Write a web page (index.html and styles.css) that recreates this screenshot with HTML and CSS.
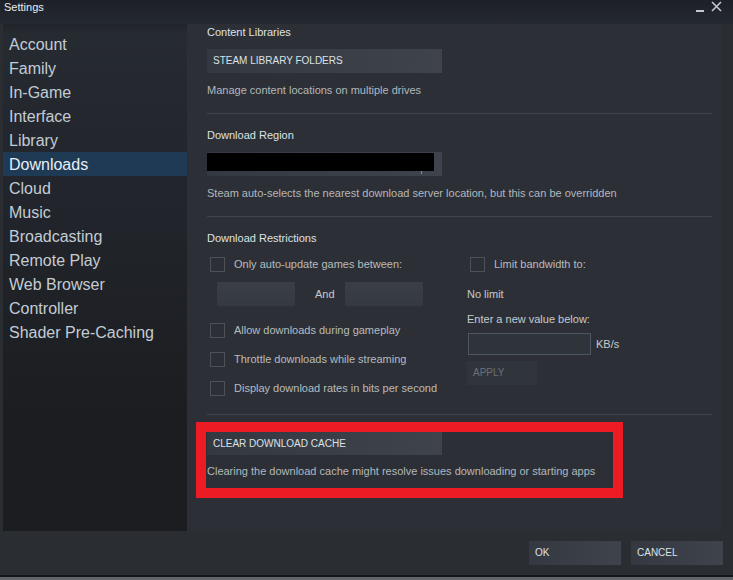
FILE: index.html
```html
<!DOCTYPE html>
<html>
<head>
<meta charset="utf-8">
<link rel="stylesheet" href="styles.css">
</head>
<body>
<div class="window">
  <div class="titlebar">
    <span class="title">Settings</span>
    <div class="controls">
      <span class="min"></span>
      <svg class="close" width="11" height="11" viewBox="0 0 11 11"><path d="M1 1 L10 10 M10 1 L1 10" stroke="#c3c7cb" stroke-width="1.6" fill="none"/></svg>
    </div>
  </div>
  <div class="main">
    <nav class="sidebar">
      <div class="item">Account</div>
      <div class="item">Family</div>
      <div class="item">In-Game</div>
      <div class="item">Interface</div>
      <div class="item">Library</div>
      <div class="item active">Downloads</div>
      <div class="item">Cloud</div>
      <div class="item">Music</div>
      <div class="item">Broadcasting</div>
      <div class="item">Remote Play</div>
      <div class="item">Web Browser</div>
      <div class="item">Controller</div>
      <div class="item">Shader Pre-Caching</div>
    </nav>
    <div class="content">
      <section class="sec first">
        <h3 class="head">Content Libraries</h3>
        <div class="btn wide">STEAM LIBRARY FOLDERS</div>
        <p class="desc">Manage content locations on multiple drives</p>
      </section>
      <div class="sep"></div>
      <section class="sec">
        <h3 class="head">Download Region</h3>
        <div class="dropdown"><div class="redact"></div><span class="tick"></span></div>
        <p class="desc">Steam auto-selects the nearest download server location, but this can be overridden</p>
      </section>
      <div class="sep"></div>
      <section class="sec">
        <h3 class="head">Download Restrictions</h3>
        <div class="restrict">
          <div class="col-left">
            <label class="check"><span class="box"></span><span>Only auto-update games between:</span></label>
            <div class="times">
              <span class="time"></span>
              <span class="and">And</span>
              <span class="time"></span>
            </div>
            <label class="check c-allow"><span class="box"></span><span>Allow downloads during gameplay</span></label>
            <label class="check c-next"><span class="box"></span><span>Throttle downloads while streaming</span></label>
            <label class="check c-next"><span class="box"></span><span>Display download rates in bits per second</span></label>
          </div>
          <div class="col-right">
            <label class="check"><span class="box"></span><span>Limit bandwidth to:</span></label>
            <p class="info nolimit">No limit</p>
            <p class="info enter">Enter a new value below:</p>
            <div class="rate"><span class="input"></span><span class="unit">KB/s</span></div>
            <div class="btn apply">APPLY</div>
          </div>
        </div>
      </section>
      <div class="sep sep-last"></div>
      <section class="cache">
        <div class="btn wide">CLEAR DOWNLOAD CACHE</div>
        <p class="desc cache-desc">Clearing the download cache might resolve issues downloading or starting apps</p>
        <div class="highlight"></div>
      </section>
    </div>
  </div>
  <div class="footer">
    <div class="btn fbtn">OK</div>
    <div class="btn fbtn">CANCEL</div>
  </div>
  <div class="edge"></div>
</div>
</body>
</html>
```

FILE: styles.css
```css
* { box-sizing: border-box; }
html, body { margin: 0; padding: 0; }
body {
  background: #2a2d32;
  font-family: "Liberation Sans", Arial, sans-serif;
  width: 733px;
  height: 580px;
  overflow: hidden;
}
.window { width: 733px; height: 580px; display: flex; flex-direction: column; }

.titlebar {
  height: 24px;
  display: flex;
  justify-content: space-between;
  background: linear-gradient(#1d2028, #252930);
  color: #e9ecef;
}
.title { font-size: 11px; line-height: 14px; padding-left: 4px; }
.controls { display: flex; align-items: flex-start; padding-right: 11px; }
.min { width: 8px; height: 2px; background: #c3c7cb; margin-top: 10px; margin-right: 7px; }
.close { margin-top: 1px; }

.main { height: 507px; display: flex; padding-left: 3px; padding-right: 11px; }
.sidebar {
  width: 184px;
  padding-top: 8px;
  background: linear-gradient(#20232a 0px, #262a31 10px, #21242a 200px, #1b1d20 400px, #1b1d20);
}
.item {
  height: 24px;
  line-height: 23px;
  padding-top: 1px;
  font-size: 16px;
  padding-left: 6px;
  color: #c3ccd4;
}
.item.active { background: #1e3a55; color: #e8eef3; }

.content {
  flex: 1;
  background: #2c3036;
  padding-left: 20px;
  padding-right: 10px;
}
.sec { padding-top: 14px; }
.sec.first { padding-top: 1px; }
.head { margin: 0; font-size: 11px; line-height: 14px; font-weight: normal; color: #dde2e6; }
.desc { margin: 10px 0 0; font-size: 11px; line-height: 14px; color: #b3b7bb; }
.sep { height: 1px; background: #40444b; margin-top: 16px; }
.sep-last { margin-top: 19px; }

.btn {
  height: 24px;
  line-height: 24px;
  font-size: 10px;
  padding-left: 6px;
  color: #dce1e5;
  background: linear-gradient(100deg, #343941, #3f444c);
}
.wide { width: 235px; margin-top: 10px; }

.dropdown {
  width: 235px;
  height: 24px;
  margin-top: 10px;
  background: linear-gradient(100deg, #343941, #3f444c);
  position: relative;
  padding-top: 1px;
}
.redact { width: 227px; height: 18px; background: #000; }
.tick { position: absolute; left: 214px; top: 19px; width: 1px; height: 3px; background: #8a8f94; }

.restrict { display: flex; margin-top: 12px; align-items: flex-start; }
.col-left { width: 260px; }
.col-right { flex: 1; }
.check {
  display: flex;
  align-items: center;
  height: 14px;
  margin-left: 3px;
  font-size: 11px;
  color: #b7bbbf;
}
.box { width: 15px; height: 15px; border: 1px solid #4c5158; margin-right: 9px; flex: none; }
.times { display: flex; align-items: center; margin-top: 11px; margin-left: 10px; height: 24px; }
.time { width: 78px; height: 24px; background: linear-gradient(#3a3f47, #353a42); }
.and { font-size: 11px; color: #c6cacd; margin-left: 20px; margin-right: 10px; width: 20px; }
.c-allow { margin-top: 17px; }
.c-next { margin-top: 15px; }

.info { margin: 0; font-size: 11px; line-height: 14px; color: #c6cacd; }
.nolimit { margin-top: 16px; }
.enter { margin-top: 11px; }
.rate { display: flex; align-items: center; margin-top: 7px; }
.input { width: 123px; height: 22px; margin-left: 1px; border: 1px solid #4d5563; background: #2f343b; }
.unit { font-size: 11px; color: #c6cacd; margin-left: 5px; }
.apply { width: 70px; margin-top: 6px; color: #6c7177; background: #30353c; }

.cache { position: relative; padding-top: 17px; }
.cache .wide { margin-top: 0; height: 23px; line-height: 23px; }
.cache-desc { margin-top: 9px; }
.highlight {
  position: absolute;
  left: -11px;
  top: 7px;
  width: 427px;
  height: 76px;
  border: 10px solid #ed1c24;
}

.footer {
  height: 44px;
  display: flex;
  justify-content: flex-end;
  gap: 10px;
  padding-top: 10px;
  padding-right: 10px;
}
.fbtn { width: 92px; }
.edge { height: 5px; border-top: 2px solid #141619; background: #62666b; }
```
